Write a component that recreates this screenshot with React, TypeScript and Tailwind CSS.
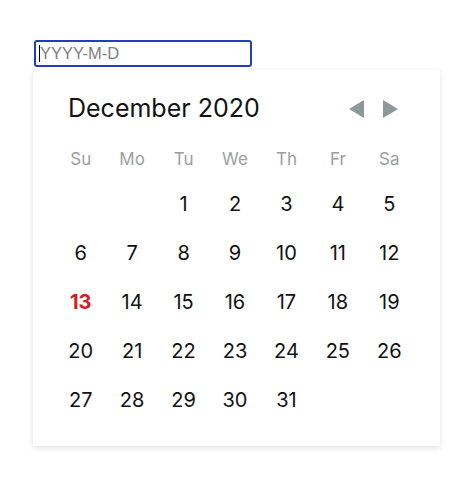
const weekdays = ['Su', 'Mo', 'Tu', 'We', 'Th', 'Fr', 'Sa'];

function buildDays(): (number | null)[] {
  const cells: (number | null)[] = [null, null];
  for (let d = 1; d <= 31; d++) cells.push(d);
  while (cells.length % 7 !== 0) cells.push(null);
  return cells;
}

export default function App() {
  const days = buildDays();
  const today = 13;

  return (
    <div className="min-h-[479px] w-[474px] bg-white pl-[34px] pt-[40px]" style={{ fontFamily: 'Inter, "Noto Sans", sans-serif' }}>
      <div className="flex h-[27px] w-[218px] items-center rounded-[3px] border-2 border-[#1f3fbf] pl-[3px]">
        <span className="h-[17px] w-px bg-black" />
        <span className="text-[16.5px] leading-none text-[#808080]" style={{ fontFamily: '"Liberation Sans", Arial, sans-serif' }}>
          YYYY-M-D
        </span>
      </div>

      <div className="-ml-px mt-[3px] h-[376px] w-[407px] bg-white pl-[22px] pr-[25px] pt-[24px] shadow-[0_2px_6px_rgba(0,0,0,0.12)]">
        <div className="flex h-[30px] items-center justify-between pl-[13px]">
          <span className="text-[25px] font-normal text-[#111]">December 2020</span>
          <div className="flex items-center gap-[19px] pr-[17px]">
            <svg width="15" height="18" viewBox="0 0 15 18">
              <polygon points="15,0 15,18 0,9" fill="#8b9998" />
            </svg>
            <svg width="15" height="18" viewBox="0 0 15 18">
              <polygon points="0,0 0,18 15,9" fill="#8b9998" />
            </svg>
          </div>
        </div>

        <div className="mt-[21px] grid grid-cols-7">
          {weekdays.map((w) => (
            <div key={w} className="flex h-[30px] items-center justify-center text-[17px] text-[#9aa0a0]">
              {w}
            </div>
          ))}
        </div>

        <div className="mt-[14px] grid grid-cols-7 gap-y-[19px]">
          {days.map((d, i) => (
            <div
              key={i}
              className={
                d === today
                  ? 'flex h-[30px] items-center justify-center text-[20px] font-bold text-[#d3201e]'
                  : 'flex h-[30px] items-center justify-center text-[20px] text-[#111]'
              }
            >
              {d ?? ''}
            </div>
          ))}
        </div>
      </div>
    </div>
  );
}
